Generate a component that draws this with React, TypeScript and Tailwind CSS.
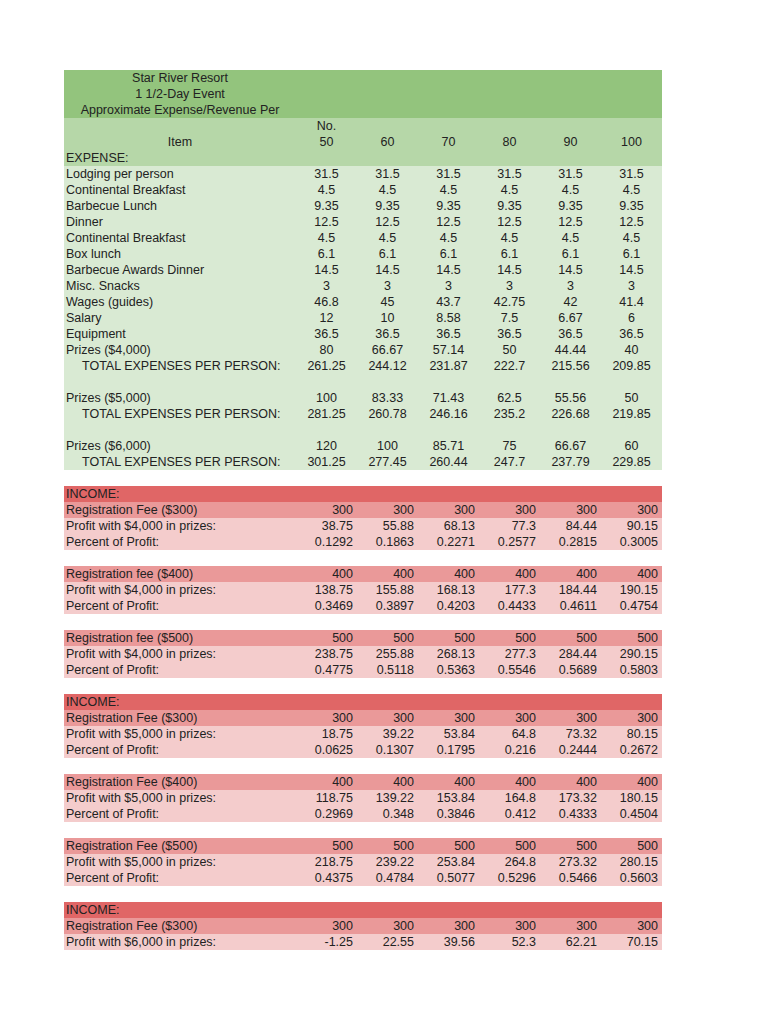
import React from "react";

type Row = { label: string; vals?: (string | number)[]; indent?: boolean };

const expense: (Row | null)[] = [
  { label: "Lodging per person", vals: [31.5, 31.5, 31.5, 31.5, 31.5, 31.5] },
  { label: "Continental Breakfast", vals: [4.5, 4.5, 4.5, 4.5, 4.5, 4.5] },
  { label: "Barbecue Lunch", vals: [9.35, 9.35, 9.35, 9.35, 9.35, 9.35] },
  { label: "Dinner", vals: [12.5, 12.5, 12.5, 12.5, 12.5, 12.5] },
  { label: "Continental Breakfast", vals: [4.5, 4.5, 4.5, 4.5, 4.5, 4.5] },
  { label: "Box lunch", vals: [6.1, 6.1, 6.1, 6.1, 6.1, 6.1] },
  { label: "Barbecue Awards Dinner", vals: [14.5, 14.5, 14.5, 14.5, 14.5, 14.5] },
  { label: "Misc. Snacks", vals: [3, 3, 3, 3, 3, 3] },
  { label: "Wages (guides)", vals: [46.8, 45, 43.7, 42.75, 42, 41.4] },
  { label: "Salary", vals: [12, 10, 8.58, 7.5, 6.67, 6] },
  { label: "Equipment", vals: [36.5, 36.5, 36.5, 36.5, 36.5, 36.5] },
  { label: "Prizes ($4,000)", vals: [80, 66.67, 57.14, 50, 44.44, 40] },
  { label: "TOTAL EXPENSES PER PERSON:", indent: true, vals: [261.25, 244.12, 231.87, 222.7, 215.56, 209.85] },
  null,
  { label: "Prizes ($5,000)", vals: [100, 83.33, 71.43, 62.5, 55.56, 50] },
  { label: "TOTAL EXPENSES PER PERSON:", indent: true, vals: [281.25, 260.78, 246.16, 235.2, 226.68, 219.85] },
  null,
  { label: "Prizes ($6,000)", vals: [120, 100, 85.71, 75, 66.67, 60] },
  { label: "TOTAL EXPENSES PER PERSON:", indent: true, vals: [301.25, 277.45, 260.44, 247.7, 237.79, 229.85] },
];

type Block = { income?: boolean; reg: Row; rows: Row[] };

const blocks: Block[] = [
  {
    income: true,
    reg: { label: "Registration Fee ($300)", vals: [300, 300, 300, 300, 300, 300] },
    rows: [
      { label: "Profit with $4,000 in prizes:", vals: [38.75, 55.88, 68.13, 77.3, 84.44, 90.15] },
      { label: "Percent of Profit:", vals: ["0.1292", "0.1863", "0.2271", "0.2577", "0.2815", "0.3005"] },
    ],
  },
  {
    reg: { label: "Registration fee ($400)", vals: [400, 400, 400, 400, 400, 400] },
    rows: [
      { label: "Profit with $4,000 in prizes:", vals: [138.75, 155.88, 168.13, 177.3, 184.44, 190.15] },
      { label: "Percent of Profit:", vals: ["0.3469", "0.3897", "0.4203", "0.4433", "0.4611", "0.4754"] },
    ],
  },
  {
    reg: { label: "Registration fee ($500)", vals: [500, 500, 500, 500, 500, 500] },
    rows: [
      { label: "Profit with $4,000 in prizes:", vals: [238.75, 255.88, 268.13, 277.3, 284.44, 290.15] },
      { label: "Percent of Profit:", vals: ["0.4775", "0.5118", "0.5363", "0.5546", "0.5689", "0.5803"] },
    ],
  },
  {
    income: true,
    reg: { label: "Registration Fee ($300)", vals: [300, 300, 300, 300, 300, 300] },
    rows: [
      { label: "Profit with $5,000 in prizes:", vals: [18.75, 39.22, 53.84, 64.8, 73.32, 80.15] },
      { label: "Percent of Profit:", vals: ["0.0625", "0.1307", "0.1795", "0.216", "0.2444", "0.2672"] },
    ],
  },
  {
    reg: { label: "Registration Fee ($400)", vals: [400, 400, 400, 400, 400, 400] },
    rows: [
      { label: "Profit with $5,000 in prizes:", vals: [118.75, 139.22, 153.84, 164.8, 173.32, 180.15] },
      { label: "Percent of Profit:", vals: ["0.2969", "0.348", "0.3846", "0.412", "0.4333", "0.4504"] },
    ],
  },
  {
    reg: { label: "Registration Fee ($500)", vals: [500, 500, 500, 500, 500, 500] },
    rows: [
      { label: "Profit with $5,000 in prizes:", vals: [218.75, 239.22, 253.84, 264.8, 273.32, 280.15] },
      { label: "Percent of Profit:", vals: ["0.4375", "0.4784", "0.5077", "0.5296", "0.5466", "0.5603"] },
    ],
  },
  {
    income: true,
    reg: { label: "Registration Fee ($300)", vals: [300, 300, 300, 300, 300, 300] },
    rows: [{ label: "Profit with $6,000 in prizes:", vals: ["-1.25", 22.55, 39.56, 52.3, 62.21, 70.15] }],
  },
];

const grid = "grid grid-cols-[232px_repeat(6,61px)] h-4 leading-4";

function ExpenseRow({ row }: { row: Row | null }) {
  if (!row) return <div className={grid} />;
  return (
    <div className={grid}>
      <div className={`pl-[2px] whitespace-nowrap ${row.indent ? "pl-[18px]" : ""}`}>{row.label}</div>
      {row.vals!.map((v, i) => (
        <div key={i} className="text-center">
          {v}
        </div>
      ))}
    </div>
  );
}

function IncomeRow({ row, bg }: { row: Row; bg: string }) {
  return (
    <div className={`${grid} ${bg}`}>
      <div className="pl-[2px] whitespace-nowrap">{row.label}</div>
      {row.vals!.map((v, i) => (
        <div key={i} className="text-right pr-[4px]">
          {v}
        </div>
      ))}
    </div>
  );
}

export default function App() {
  return (
    <div
      className="w-[768px] h-[1024px] bg-white pt-[70px] pl-[64px] text-[12.5px] text-[#222]"
      style={{ fontFamily: '"Liberation Sans", Arial, sans-serif' }}
    >
      <div className="w-[598px] flex flex-col">
        <div className="bg-[#93c47d]">
          <div className={grid}>
            <div className="text-center">Star River Resort</div>
          </div>
          <div className={grid}>
            <div className="text-center">1 1/2-Day Event</div>
          </div>
          <div className={grid}>
            <div className="text-center whitespace-nowrap">Approximate Expense/Revenue Per</div>
          </div>
        </div>
        <div className="bg-[#b6d7a8]">
          <div className={grid}>
            <div />
            <div className="text-center">No.</div>
          </div>
          <div className={grid}>
            <div className="text-center">Item</div>
            {["50", "60", "70", "80", "90", "100"].map((h) => (
              <div key={h} className="text-center">
                {h}
              </div>
            ))}
          </div>
          <div className={grid}>
            <div className="pl-[2px]">EXPENSE:</div>
          </div>
        </div>
        <div className="bg-[#d9ead3]">
          {expense.map((r, i) => (
            <ExpenseRow key={i} row={r} />
          ))}
        </div>
        {blocks.map((b, bi) => (
          <div key={bi} className="flex flex-col pt-4">
            {b.income && (
              <div className={`${grid} bg-[#e06666]`}>
                <div className="pl-[2px]">INCOME:</div>
              </div>
            )}
            <IncomeRow row={b.reg} bg="bg-[#ea9999]" />
            {b.rows.map((r, ri) => (
              <IncomeRow key={ri} row={r} bg="bg-[#f4cccc]" />
            ))}
          </div>
        ))}
      </div>
    </div>
  );
}
